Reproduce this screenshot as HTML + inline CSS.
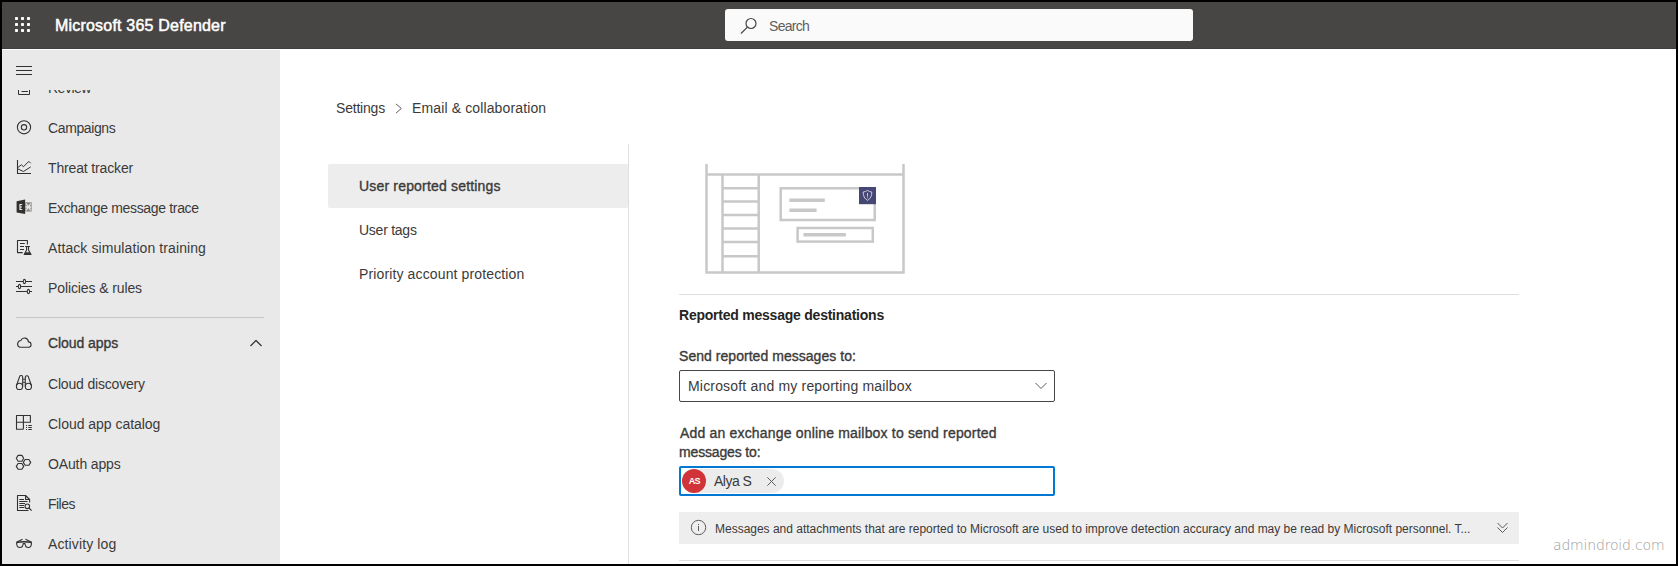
<!DOCTYPE html>
<html lang="en">
<head>
<meta charset="utf-8">
<title>Microsoft 365 Defender</title>
<style>
*{box-sizing:border-box;margin:0;padding:0}
html,body{width:1678px;height:566px;overflow:hidden;background:#fff}
body{font-family:"Liberation Sans",Arial,sans-serif;font-size:14px;color:#3b3a39;position:relative}
.frame{position:absolute;left:0;top:0;width:1678px;height:566px;border:2px solid #000;z-index:50;pointer-events:none}
.t{position:absolute;white-space:nowrap;line-height:20px;height:20px}
.hdr{position:absolute;left:2px;top:2px;width:1674px;height:47px;background:#484644;box-shadow:inset 0 -1px 0 #413f3e}
.side{position:absolute;left:2px;top:50px;width:278px;height:514px;background:#e9e9e9}
.sb{-webkit-text-stroke:0.35px currentColor}
.b{font-weight:bold}
svg{position:absolute;overflow:visible}
</style>
</head>
<body>
<div class="hdr"></div>
<div class="side"></div>

<!-- header -->
<svg style="left:14px;top:16px" width="18" height="18" viewBox="0 0 18 18" fill="#fff">
<rect x="1" y="1" width="3" height="3" rx=".8"/><rect x="7" y="1" width="3" height="3" rx=".8"/><rect x="13" y="1" width="3" height="3" rx=".8"/>
<rect x="1" y="7" width="3" height="3" rx=".8"/><rect x="7" y="7" width="3" height="3" rx=".8"/><rect x="13" y="7" width="3" height="3" rx=".8"/>
<rect x="1" y="13" width="3" height="3" rx=".8"/><rect x="7" y="13" width="3" height="3" rx=".8"/><rect x="13" y="13" width="3" height="3" rx=".8"/>
</svg>
<div class="t sb" id="title" style="-webkit-text-stroke:0.5px #fff;left:55px;top:16px;font-size:16px;color:#fff;letter-spacing:0.20px">Microsoft 365 Defender</div>
<div style="position:absolute;left:725px;top:9px;width:468px;height:32px;background:#fafafa;border-radius:3px"></div>
<svg style="left:740px;top:17px" width="18" height="18" viewBox="0 0 18 18" fill="none" stroke="#484644" stroke-width="1.2"><circle cx="11" cy="6.5" r="5"/><path d="M7.4 10.1 L1 16.5"/></svg>
<div class="t" id="search" style="left:769px;top:16px;color:#605e5c;letter-spacing:-0.70px">Search</div>

<!-- sidebar -->

<svg style="left:0;top:0" width="280" height="566" viewBox="0 0 280 566" fill="none" stroke="#323130" stroke-width="1.1" stroke-linejoin="round">
<!-- hamburger -->
<path d="M16 66.500H32M16 70.500H32M16 74.500H32" stroke-width="1"/>
<!-- review (clipped) -->
<path d="M18.500 90V94.500H29.500V90M21.500 91.500H28" stroke-width="1"/>
<!-- campaigns -->
<circle cx="24" cy="127.300" r="6.600"/><circle cx="24" cy="127.300" r="2.700"/>
<!-- threat tracker -->
<path d="M17.500 160V173.500H31"/><path d="M17.600 167.700L21.400 164.800L23.500 166.700L28.800 161.400L30.700 163.300M17.800 168.900L23.500 171.500L30.700 166.900" stroke-width="1"/>
<!-- exchange -->
<path d="M16.600 201.200L25.100 199.600V213.900L16.600 212.600Z" fill="#323130" stroke="none"/>
<path d="M19.400 204H22.200V205H20.600V206.500H22V207.500H20.600V209H22.200V210H19.400Z" fill="#e9e9e9" stroke="none"/>
<rect x="25.100" y="202.300" width="6.600" height="9.200" fill="#8a8886" stroke="none"/>
<path d="M26 203.500L30.800 210.300M30.800 203.500L26 210.300M25.500 207H31.300" stroke="#e9e9e9" stroke-width="1.300"/>
<!-- attack simulation -->
<path d="M22.700 252.600H17.500V240.500H27.400V244.500"/><path d="M20 243.500H24.800M20 246.500H24M20 249.500H24" stroke-width="1"/>
<path d="M25.100 246.500H29.900M26.600 246.500V250L24.200 254.500H31L28.500 250V246.500"/><path d="M25.200 252.300H29.900L31.300 254.900H23.900Z" fill="#323130" stroke="none"/>
<!-- policies -->
<path d="M16 281.500H32M16 286.500H32M16 291.500H32"/>
<ellipse cx="24.400" cy="281.500" rx="1.200" ry="2.100" fill="#e9e9e9"/><ellipse cx="19.500" cy="286.500" rx="1.200" ry="2.100" fill="#e9e9e9"/><ellipse cx="28.400" cy="291.500" rx="1.200" ry="2.100" fill="#e9e9e9"/>
<!-- cloud -->
<path d="M19.700 347.200A3.500 3.500 0 0 1 20.900 340.500A3.900 3.900 0 0 1 28.400 341.900A2.700 2.700 0 0 1 29.100 347.200Z"/>
<path d="M250.500 346L256 340.500L261.500 346" stroke-width="1.200"/>
<!-- binoculars -->
<circle cx="19.500" cy="386.400" r="3.100"/><circle cx="28.400" cy="386.400" r="3.100"/>
<path d="M16.500 385.500L19.600 376.600A1.600 1.600 0 0 1 22.700 377V386.500M31.400 385.500L28.300 376.600A1.600 1.600 0 0 0 25.300 377V386.500M22.700 379.200H25.300M22.700 382.200H25.300"/>
<!-- catalog -->
<path d="M23.400 429.300H16.500V415.500H30.400V422.200H16.500M23.400 415.500V429.300"/>
<path d="M26 425.500H27M28.300 425.500H31.800M26 427.500H27M28.300 427.500H31.800M26 429.500H27M28.300 429.500H31.800" stroke-width="1"/>
<!-- oauth -->
<path d="M16.300 458.300L18.100 455.400H21.900L23.700 458.300L21.900 461.200H18.100Z"/>
<path d="M23.300 462.400L25.100 459.500H28.900L30.700 462.400L28.900 465.300H25.100Z"/>
<path d="M16.300 466.400L18.100 463.500H21.900L23.700 466.400L21.900 469.300H18.100Z"/>
<!-- files -->
<path d="M28.500 510.500H17.500V495.500H25.600L29.600 499.500V502.600M25.600 495.500V499.500H29.600"/>
<path d="M19.300 499.500H24M19.300 501.500H27.500M19.300 503.500H25M19.300 505.500H24M19.300 507.500H24" stroke-width="1"/>
<circle cx="27.300" cy="506.300" r="2.300" fill="#e9e9e9"/><path d="M29 508L31.700 510.700"/>
<!-- glasses -->
<path d="M16.300 542.600C20 541.800 28 541.800 31.800 542.600" stroke-width="1.400"/>
<path d="M16.600 543C16.600 549 23 549 23.200 543.200M25 543.200C25.200 549 31.500 549 31.500 543M23.200 543.600H25M16.400 542.300L22.500 539.200M31.700 542.300L25.500 539.200"/>
</svg>
<div class="t" id="s0" style="left:48px;top:78px;clip-path:inset(12px 0 0 0);letter-spacing:-0.5px">Review</div>
<div class="t" id="s1" style="left:48px;top:118px;letter-spacing:-0.38px">Campaigns</div>
<div class="t" id="s2" style="left:48px;top:158px;letter-spacing:-0.15px">Threat tracker</div>
<div class="t" id="s3" style="left:48px;top:198px;letter-spacing:-0.33px">Exchange message trace</div>
<div class="t" id="s4" style="left:48px;top:238px;letter-spacing:0.09px">Attack simulation training</div>
<div class="t" id="s5" style="left:48px;top:278px;letter-spacing:-0.11px">Policies &amp; rules</div>
<div style="position:absolute;left:16px;top:317px;width:248px;height:1px;background:#c8c6c4"></div>
<div class="t sb" id="s6" style="left:48px;top:333px;letter-spacing:-0.06px">Cloud apps</div>
<div class="t" id="s7" style="left:48px;top:374px;letter-spacing:-0.18px">Cloud discovery</div>
<div class="t" id="s8" style="left:48px;top:414px;letter-spacing:-0.03px">Cloud app catalog</div>
<div class="t" id="s9" style="left:48px;top:454px;letter-spacing:-0.13px">OAuth apps</div>
<div class="t" id="s10" style="left:48px;top:494px;letter-spacing:-0.54px">Files</div>
<div class="t" id="s11" style="left:48px;top:534px;letter-spacing:0.12px">Activity log</div>

<!-- main -->
<div class="t" id="b1" style="left:336px;top:98px;letter-spacing:-0.20px">Settings</div>
<svg style="left:394px;top:102px" width="9" height="13" viewBox="0 0 9 13" fill="none" stroke="#605e5c" stroke-width="1"><path d="M2 1.900L7.300 6.500L2 11.100"/></svg>
<div class="t" id="b2" style="left:412px;top:98px;letter-spacing:0.13px">Email &amp; collaboration</div>

<div style="position:absolute;left:628px;top:144px;width:1px;height:420px;background:#e1dfdd"></div>
<div style="position:absolute;left:328px;top:164px;width:300px;height:44px;background:#ededed;border-radius:2px"></div>
<div class="t sb" id="n1" style="left:359px;top:176px;letter-spacing:0.18px">User reported settings</div>
<div class="t" id="n2" style="left:359px;top:220px;letter-spacing:-0.25px">User tags</div>
<div class="t" id="n3" style="left:359px;top:264px;letter-spacing:0.13px">Priority account protection</div>

<!-- illustration -->
<svg style="left:0;top:0" width="1000" height="300" viewBox="0 0 1000 300" fill="none" stroke="#c8c8c8" stroke-width="2.500">
<path d="M706.500 164V272.500H903.500V164"/><path d="M706.500 174.400H903.500"/><path d="M722.500 174.400V272.500M758.700 174.400V272.500"/>
<path d="M722.500 188.300H758.700M722.500 201.500H758.700M722.500 214.900H758.700M722.500 228.600H758.700M722.500 242.100H758.700M722.500 256.300H758.700"/>
<rect x="780.700" y="188.300" width="94" height="31.700"/><path d="M789.400 200.300H824.800M789.400 210.300H816.600" stroke-width="3.500"/>
<rect x="797.600" y="228" width="75.200" height="13.600"/><path d="M803.500 234.700H845.800" stroke-width="3.500"/>
<rect x="859" y="187" width="17" height="17.200" fill="#464775" stroke="none"/>
<path d="M867.500 190.400C868.800 191.400 870.300 191.900 871.800 192C871.800 196 870.500 198.700 867.500 200.400C864.500 198.700 863.200 196 863.200 192C864.700 191.900 866.200 191.400 867.500 190.400Z" stroke="#d6d6e6" stroke-width=".9"/>
<path d="M867.500 193V196.600M867.500 197.400V198.300" stroke="#d6d6e6" stroke-width=".9"/>
</svg>

<div style="position:absolute;left:679px;top:294px;width:840px;height:1px;background:#e1dfdd"></div>
<div class="t b" id="m1" style="color:#252423;left:679px;top:305px;letter-spacing:-0.23px">Reported message destinations</div>
<div class="t sb" id="m2" style="left:679px;top:346px;letter-spacing:0.04px">Send reported messages to:</div>
<div style="position:absolute;left:679px;top:370px;width:376px;height:32px;border:1px solid #484644;border-radius:2px;background:#fff"></div>
<div class="t" id="m3" style="left:688px;top:376px;letter-spacing:0.18px">Microsoft and my reporting mailbox</div>
<svg style="left:1035px;top:382px" width="12" height="8" viewBox="0 0 12 8" fill="none" stroke="#605e5c" stroke-width="1"><path d="M.5 1 L6 6.500 L11.500 1"/></svg>
<div class="t sb" id="m4" style="left:680px;top:423px;letter-spacing:0.18px">Add an exchange online mailbox to send reported</div>
<div class="t sb" id="m5" style="left:679px;top:442px;letter-spacing:-0.15px">messages to:</div>
<div style="position:absolute;left:679px;top:466px;width:376px;height:30px;border:2px solid #0078d4;border-radius:2px;background:#fff"></div>
<div style="position:absolute;left:682px;top:469px;width:102px;height:24px;border-radius:12px;background:#ececec"></div>
<div style="position:absolute;left:682px;top:469px;width:24px;height:24px;border-radius:12px;background:#d13438"></div>
<div class="t b" id="as" style="left:688.700px;top:471px;font-size:9px;color:#fff;letter-spacing:-0.80px">AS</div>
<div class="t" id="m6" style="left:714px;top:471px;letter-spacing:-0.50px">Alya S</div>
<svg style="left:767px;top:477px" width="9" height="9" viewBox="0 0 9 9" stroke="#605e5c" stroke-width="1"><path d="M.3 .3L8.700 8.700M8.700 .3L.3 8.700"/></svg>

<div style="position:absolute;left:679px;top:512px;width:840px;height:32px;background:#eeeeee"></div>
<svg style="left:690px;top:519px" width="17" height="17" viewBox="0 0 17 17" fill="none" stroke="#605e5c" stroke-width="1"><circle cx="8.500" cy="8.500" r="7.200"/><path d="M8.500 7V12M8.500 5V6.100"/></svg>
<div class="t" id="m7" style="left:715px;top:519px;font-size:12px;letter-spacing:-0.01px">Messages and attachments that are reported to Microsoft are used to improve detection accuracy and may be read by Microsoft personnel. T...</div>
<svg style="left:1497px;top:522px" width="11" height="11" viewBox="0 0 11 11" fill="none" stroke="#605e5c" stroke-width="1"><path d="M.5 1L5.500 6L10.500 1M.5 5.500L5.500 10.500L10.500 5.500"/></svg>
<div style="position:absolute;left:679px;top:560px;width:840px;height:1px;background:#e1dfdd"></div>

<div class="t" id="wm" style="left:1553px;top:535px;font-size:14px;color:#9a9a9a;font-weight:200;font-family:'DejaVu Sans Light','DejaVu Sans','Liberation Sans',sans-serif;letter-spacing:-0.18px">admindroid.com</div>

<div class="frame"></div>
</body>
</html>
